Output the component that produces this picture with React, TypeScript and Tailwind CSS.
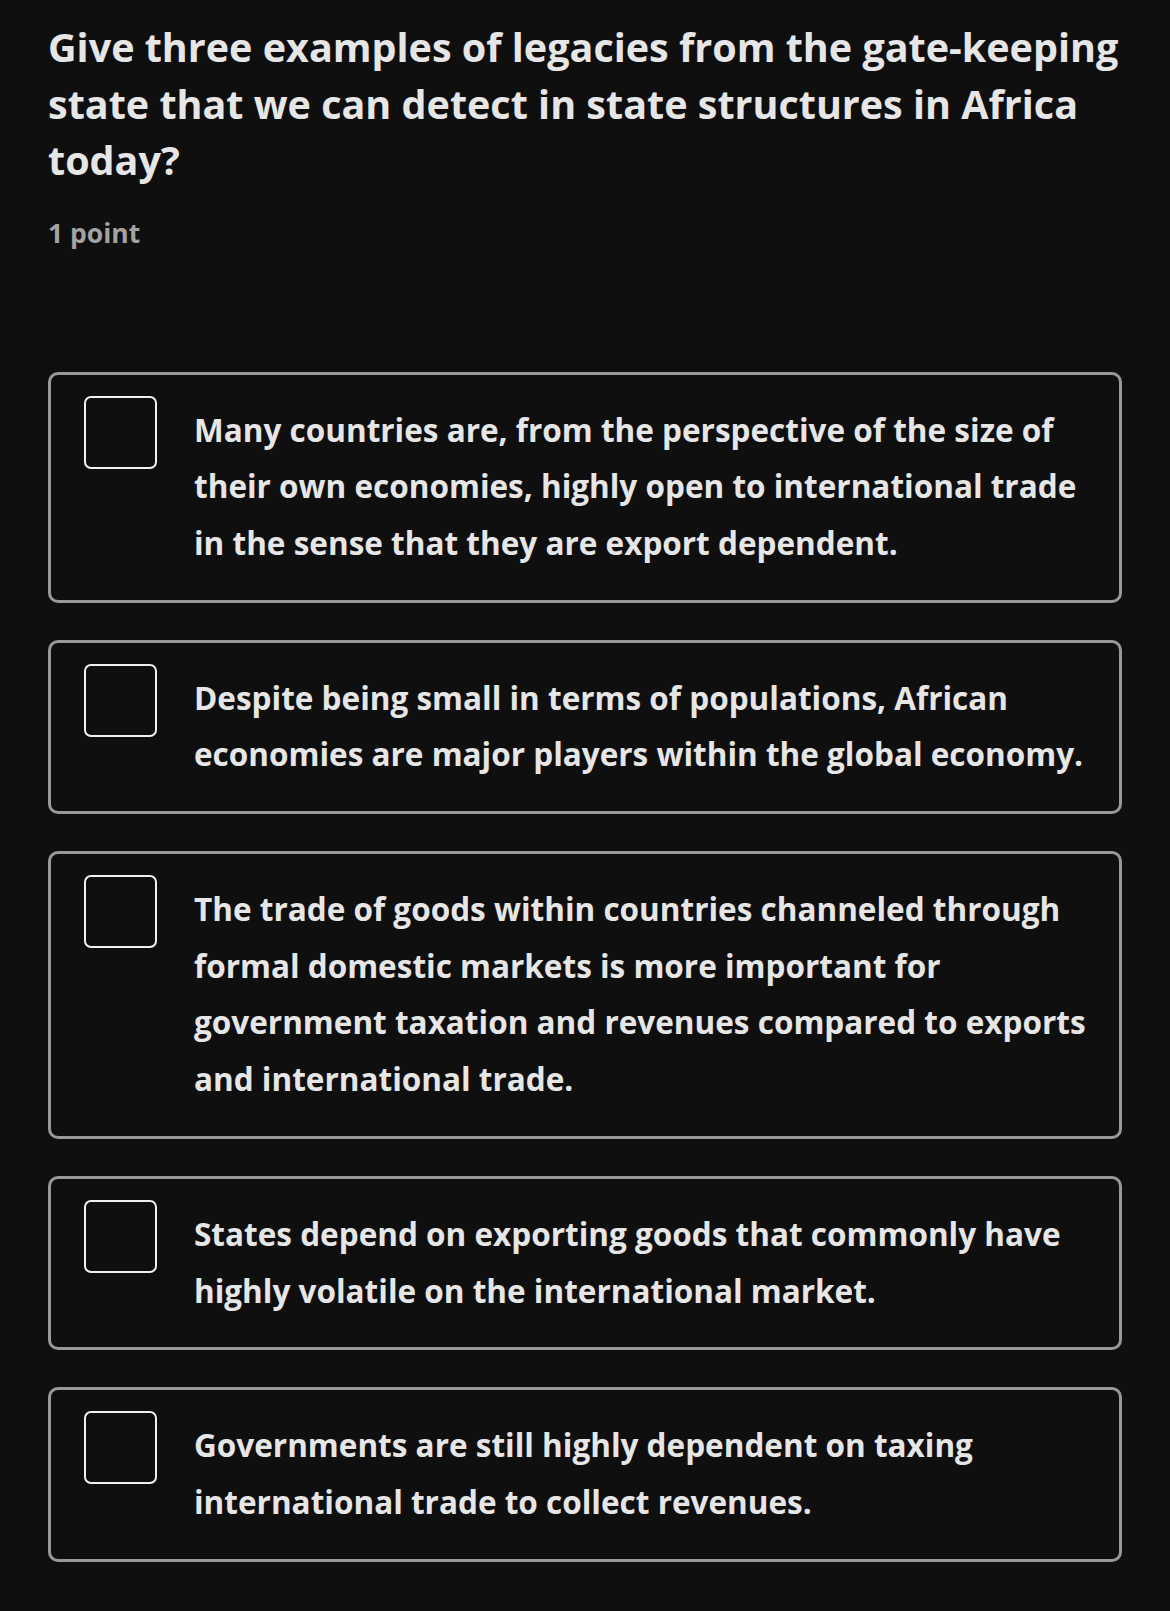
import React from "react";

const QUESTION = [
  "Give three examples of legacies from the gate-keeping",
  "state that we can detect in state structures in Africa",
  "today?",
];

const OPTIONS: string[][] = [
  [
    "Many countries are, from the perspective of the size of",
    "their own economies, highly open to international trade",
    "in the sense that they are export dependent.",
  ],
  [
    "Despite being small in terms of populations, African",
    "economies are major players within the global economy.",
  ],
  [
    "The trade of goods within countries channeled through",
    "formal domestic markets is more important for",
    "government taxation and revenues compared to exports",
    "and international trade.",
  ],
  [
    "States depend on exporting goods that commonly have",
    "highly volatile on the international market.",
  ],
  [
    "Governments are still highly dependent on taxing",
    "international trade to collect revenues.",
  ],
];

function Option({ lines }: { lines: string[] }) {
  return (
    <label className="flex items-start rounded-[10px] border-[3px] border-[#999999] pt-[27px] pb-[28px] pl-[33px] pr-[30px]">
      {/* empty checkbox */}
      <span className="-mt-[6px] h-[73px] w-[73px] shrink-0 rounded-[7px] border-2 border-[#f0f0f0]" />
      <span className="ml-[37px] text-[31.5px] font-bold leading-[56.7px] text-[#e6e6e6]">
        {lines.map((l) => (
          <span key={l} className="block whitespace-nowrap">
            {l}
          </span>
        ))}
      </span>
    </label>
  );
}

export default function App() {
  return (
    <div
      className="min-h-screen bg-[#0f0f0f] px-12 pt-[19px] pb-[50px]"
      style={{ fontFamily: "'Open Sans', 'Noto Sans', sans-serif" }}
    >
      <h1 className="text-[39.5px] font-bold leading-[56.5px] text-[#e6e6e6]">
        {QUESTION.map((l) => (
          <span key={l} className="block whitespace-nowrap">
            {l}
          </span>
        ))}
      </h1>
      <p className="mt-[26px] text-[26.5px] font-bold leading-[36px] text-[#a3a3a3]">1 point</p>

      <div className="mt-[121px] flex flex-col gap-[37px]">
        {OPTIONS.map((o, i) => (
          <Option key={i} lines={o} />
        ))}
      </div>
    </div>
  );
}
